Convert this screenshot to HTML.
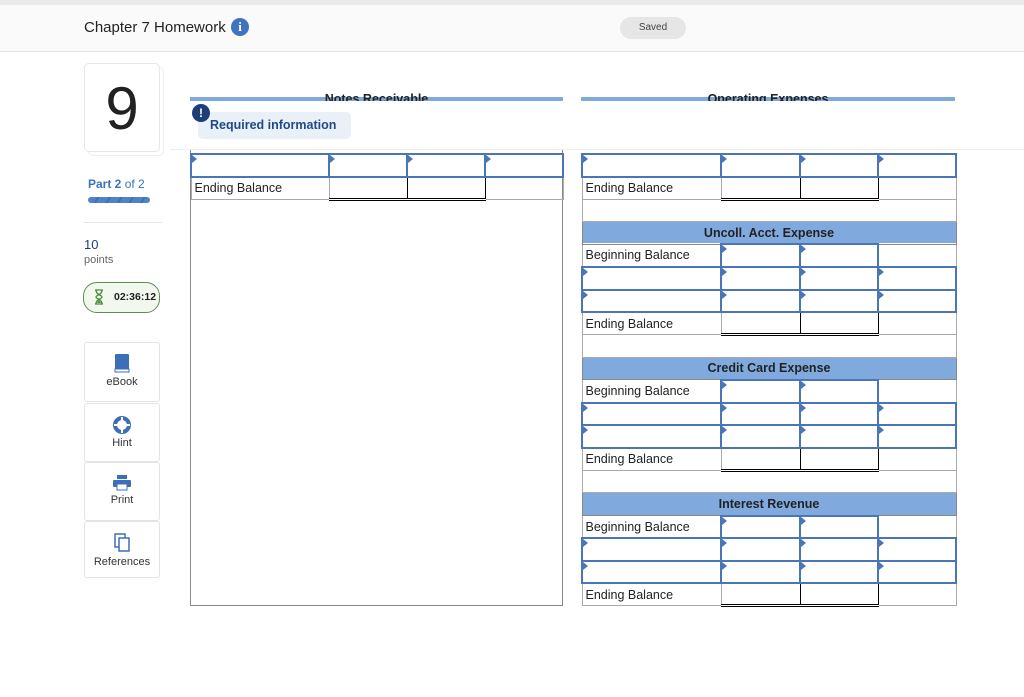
<!DOCTYPE html>
<html><head><meta charset="utf-8"><style>
*{box-sizing:border-box;margin:0;padding:0}
body{width:1024px;height:697px;background:#fff;font-family:"Liberation Sans",sans-serif;position:relative;overflow:hidden;color:#222}
.a{position:absolute}
table{border-collapse:collapse;table-layout:fixed;position:absolute;font-size:12.5px}
td{height:22.6px;border:1px solid #aaa;padding:0 3px;position:relative;white-space:nowrap}
td.i{border:2px solid #4a76b8}
td.i:before{content:"";position:absolute;left:0;top:0;border-left:5px solid #4a76b8;border-top:4px solid transparent;border-bottom:4px solid transparent}
td.e{border-left:1px solid #000;border-right:1px solid #000;border-bottom:3px double #000}
td.h{background:#80aadd;font-weight:bold;text-align:center;color:#222;border-color:#888}
.btn{position:absolute;left:84px;width:76px;border:1px solid #e4e4e4;border-radius:3px;text-align:center;font-size:11px;color:#333}
.ht{position:absolute;height:9px;overflow:hidden;text-align:center;font-size:12.5px;font-weight:bold;line-height:14px;color:#222;z-index:2}
</style></head><body>
<div class="a" style="left:0;top:0;width:1024px;height:5px;background:#e9eaea"></div>
<div class="a" style="left:0;top:5px;width:1024px;height:47px;background:#fafafa;border-bottom:1px solid #e6e6e6"></div>
<div class="a" style="left:84px;top:19px;font-size:15px;color:#222">Chapter 7 Homework</div>
<div class="a" style="left:231px;top:18px;width:18px;height:18px;border-radius:50%;background:#3f73c0;color:#fff;font:bold 13px 'Liberation Serif',serif;text-align:center;line-height:18px">i</div>
<div class="a" style="left:620px;top:17px;width:66px;height:22px;border-radius:11px;background:#e6e6e6;font-size:10px;color:#444;text-align:center;line-height:22px">Saved</div>

<div class="a" style="left:88px;top:67px;width:76px;height:89px;border:1px solid #eee;border-radius:5px"></div>
<div class="a" style="left:84px;top:63px;width:76px;height:89px;border:1px solid #e6e6e6;border-radius:5px;background:#fff;text-align:center;font-size:60px;line-height:89px;color:#222">9</div>
<div class="a" style="left:88px;top:177px;font-size:12px;color:#3a72bd"><b>Part 2</b> of 2</div>
<div class="a" style="left:88px;top:197px;width:62px;height:6px;border-radius:3px;background:repeating-linear-gradient(120deg,#4f82c8 0 8px,#3e70b6 8px 10px)"></div>
<div class="a" style="left:84px;top:222px;width:78px;height:1px;background:#e6e6e6"></div>
<div class="a" style="left:84px;top:237px;font-size:13px;color:#1f3f78">10</div>
<div class="a" style="left:84px;top:254px;font-size:11px;color:#666">points</div>
<div class="a" style="left:83px;top:282px;width:77px;height:31px;border:1px solid #5e8f50;border-radius:14px;background:#f3f8ef;font-size:10.5px;font-weight:bold;line-height:29px;padding-left:30px">02:36:12</div>
<svg class="a" style="left:94px;top:289px" width="10" height="16" viewBox="0 0 10 16"><path d="M1 1h8M1 15h8M2 1c0 5 6 5 6 7s-6 2-6 7M8 1c0 5-6 5-6 7s6 2 6 7" fill="none" stroke="#4a8a3a" stroke-width="1.3"/><path d="M3 14l2-3 2 3z" fill="#4a8a3a"/></svg>

<div class="btn" style="top:342px;height:60px"><svg width="18" height="20" style="margin-top:10px" viewBox="0 0 18 20"><rect x="2" y="1" width="14" height="16" rx="1" fill="#3d6fb8"/><rect x="2" y="16" width="14" height="3" fill="#fff" stroke="#3d6fb8"/></svg><div>eBook</div></div>
<div class="btn" style="top:403px;height:59px"><svg width="18" height="18" style="margin-top:12px" viewBox="0 0 18 18"><circle cx="9" cy="9" r="7" fill="none" stroke="#3d6fb8" stroke-width="4"/><circle cx="9" cy="9" r="3" fill="#fff"/><path d="M9 1v4M9 13v4M1 9h4M13 9h4" stroke="#fff" stroke-width="2"/></svg><div>Hint</div></div>
<div class="btn" style="top:462px;height:59px"><svg width="18" height="16" style="margin-top:12px" viewBox="0 0 18 16"><rect x="4" y="0" width="10" height="4" fill="#3d6fb8"/><rect x="0" y="5" width="18" height="7" rx="1" fill="#3d6fb8"/><rect x="4" y="9" width="10" height="6" fill="#fff" stroke="#3d6fb8"/></svg><div>Print</div></div>
<div class="btn" style="top:521px;height:57px"><svg width="18" height="20" style="margin-top:11px" viewBox="0 0 18 20"><rect x="2" y="1" width="10" height="13" fill="#fff" stroke="#3d6fb8" stroke-width="1.5"/><rect x="6" y="5" width="10" height="13" fill="#fff" stroke="#3d6fb8" stroke-width="1.5"/></svg><div>References</div></div>

<!-- left table -->
<div class="ht" style="left:190px;top:92px;width:373px">Notes Receivable</div>
<div class="a" style="left:190px;top:97px;width:373px;height:4px;background:#80aadd"></div>
<div class="a" style="left:190px;top:150px;width:373px;height:456px;border:1px solid #888;border-top:none"></div>
<table style="left:190px;top:153px;width:372px">
<colgroup><col style="width:138px"><col style="width:78px"><col style="width:78px"><col style="width:78px"></colgroup>
<tr><td class="i"></td><td class="i"></td><td class="i"></td><td class="i"></td></tr>
<tr><td>Ending Balance</td><td class="e"></td><td class="e"></td><td></td></tr>
</table>

<!-- right table -->
<div class="ht" style="left:581px;top:92px;width:374px">Operating Expenses</div>
<div class="a" style="left:581px;top:97px;width:374px;height:4px;background:#80aadd"></div>
<table style="left:581px;top:153px;width:374px">
<colgroup><col style="width:139px"><col style="width:79px"><col style="width:78px"><col style="width:78px"></colgroup>
<tr><td class="i"></td><td class="i"></td><td class="i"></td><td class="i"></td></tr>
<tr><td>Ending Balance</td><td class="e"></td><td class="e"></td><td></td></tr>
<tr><td colspan="4"></td></tr>
<tr><td class="h" colspan="4">Uncoll. Acct. Expense</td></tr>
<tr><td>Beginning Balance</td><td class="i"></td><td class="i"></td><td></td></tr>
<tr><td class="i"></td><td class="i"></td><td class="i"></td><td class="i"></td></tr>
<tr><td class="i"></td><td class="i"></td><td class="i"></td><td class="i"></td></tr>
<tr><td>Ending Balance</td><td class="e"></td><td class="e"></td><td></td></tr>
<tr><td colspan="4"></td></tr>
<tr><td class="h" colspan="4">Credit Card Expense</td></tr>
<tr><td>Beginning Balance</td><td class="i"></td><td class="i"></td><td></td></tr>
<tr><td class="i"></td><td class="i"></td><td class="i"></td><td class="i"></td></tr>
<tr><td class="i"></td><td class="i"></td><td class="i"></td><td class="i"></td></tr>
<tr><td>Ending Balance</td><td class="e"></td><td class="e"></td><td></td></tr>
<tr><td colspan="4"></td></tr>
<tr><td class="h" colspan="4">Interest Revenue</td></tr>
<tr><td>Beginning Balance</td><td class="i"></td><td class="i"></td><td></td></tr>
<tr><td class="i"></td><td class="i"></td><td class="i"></td><td class="i"></td></tr>
<tr><td class="i"></td><td class="i"></td><td class="i"></td><td class="i"></td></tr>
<tr><td>Ending Balance</td><td class="e"></td><td class="e"></td><td></td></tr>
</table>

<!-- overlay -->
<div class="a" style="left:170px;top:101px;width:854px;height:49px;background:#fff;border-bottom:1px solid #eee;z-index:3"></div>
<div class="a" style="left:198px;top:112px;width:153px;height:27px;border-radius:5px;background:#eaf0f7;font-size:12.5px;font-weight:bold;color:#1f4a85;line-height:27px;padding-left:12px;z-index:4">Required information</div>
<div class="a" style="left:192px;top:104px;width:18px;height:18px;border-radius:50%;background:#1f3e76;color:#fff;font-size:12px;font-weight:bold;text-align:center;line-height:18px;z-index:5">!</div>
</body></html>
